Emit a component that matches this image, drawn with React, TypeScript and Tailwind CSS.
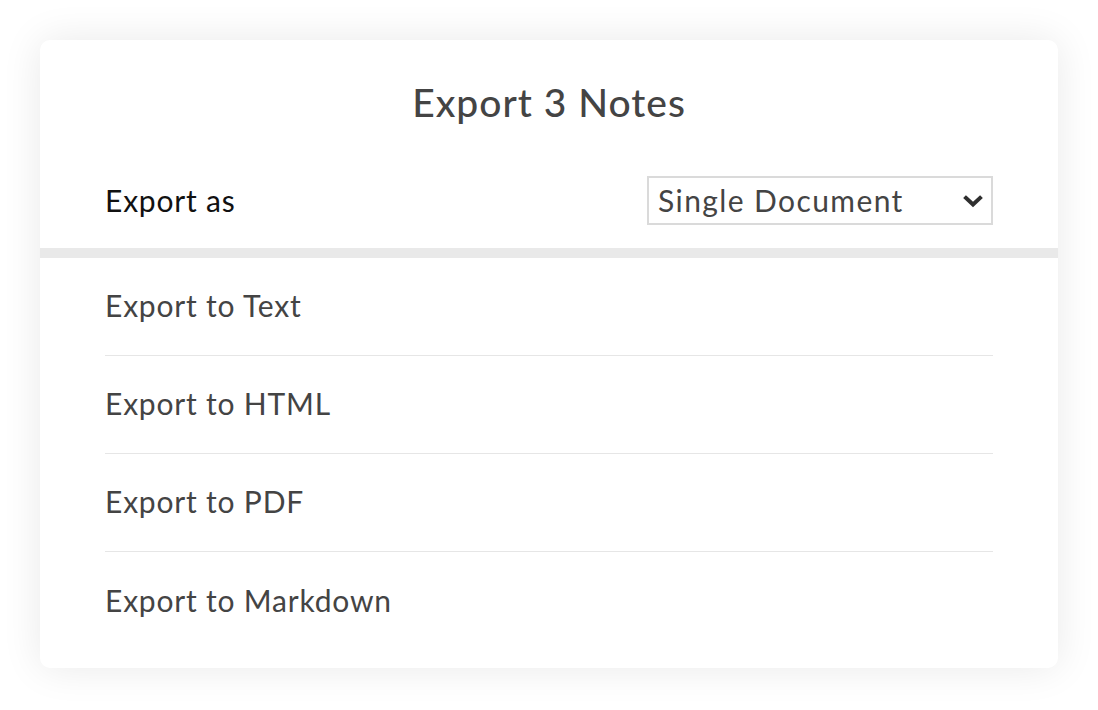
const formats = ['Text', 'HTML', 'PDF', 'Markdown'];

function Chevron() {
  return (
    <svg width="22" height="14" viewBox="0 0 22 14" fill="none" className="text-[#2f2f2f]">
      <path d="M4 4l7 6.5 7-6.5" stroke="currentColor" strokeWidth="4" strokeLinecap="square" strokeLinejoin="miter" />
    </svg>
  );
}

export default function App() {
  return (
    <div className="min-h-screen bg-white pt-[40px] px-[40px] font-['Lato','Noto_Sans',sans-serif]">
      <div className="w-[1018px] h-[628px] rounded-[10px] bg-white shadow-[0_0_40px_rgba(0,0,0,0.09)] flex flex-col">
        <h1 className="pt-[38px] h-[87px] leading-[48px] text-center text-[39px] tracking-[1px] font-medium text-[#444]">
          Export 3 Notes
        </h1>

        <div className="mt-[49px] mb-[23px] px-[65px] flex items-center justify-between">
          <span className="text-[30px] tracking-[0.8px] leading-none -mt-[2px] text-[#111]">Export as</span>
          <div className="w-[346px] h-[49px] border-2 border-[#dadada] flex items-center justify-between pl-[9px] pr-[7px]">
            <span className="text-[30px] tracking-[1.4px] leading-none -mt-[2px] text-[#444]">Single Document</span>
            <Chevron />
          </div>
        </div>

        <div className="h-[10px] bg-[#e9e9e9]" />

        <ul className="px-[65px]">
          {formats.map((f, i) => (
            <li
              key={f}
              className={[
                'h-[98px] flex items-center text-[30px] tracking-[0.8px] text-[#444] pb-[2px]',
                i < formats.length - 1 ? 'border-b border-[#e6e6e6]' : '',
              ].join(' ')}
            >
              Export to {f}
            </li>
          ))}
        </ul>
      </div>
    </div>
  );
}
